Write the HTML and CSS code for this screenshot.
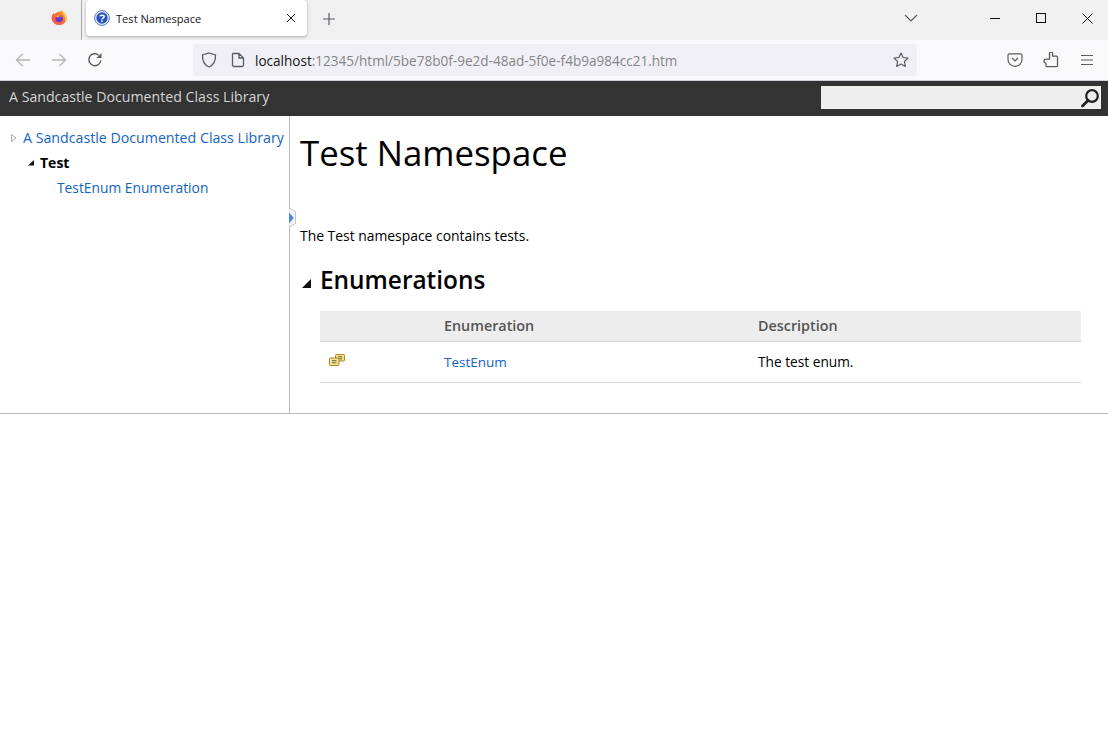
FILE: index.html
```html
<!DOCTYPE html>
<html lang="en">
<head>
<meta charset="utf-8">
<title>Test Namespace</title>
<link rel="stylesheet" href="styles.css">
</head>
<body>
<div class="tabbar">
  <div class="ff-slot">
    <svg class="ff-logo" width="16" height="16" viewBox="0 0 16 16"><defs><linearGradient id="ffbody" x1="0" y1="1" x2="1" y2="0"><stop offset="0" stop-color="#f0476a"/><stop offset=".55" stop-color="#f7752e"/><stop offset="1" stop-color="#ffc02e"/></linearGradient></defs><path d="M.5 7.500C1 5.500 1.500 4 3 2.700 3 3.500 3.300 4 3.800 4.300 5 2.500 7.500 1.500 9.500 1.600 9.800 1 10.300.5 11 0 11 1 11.800 1.600 12.800 2.300 14.600 3.800 15.800 6 15.800 8.300A7.700 7.700 0 0 1 .5 8.300Z" fill="url(#ffbody)"/><path d="M10.500 1C13.500 2.500 15.500 5.500 15.500 8.500 15.500 9.500 15.300 10.500 14.800 11.500 14.800 8 13 4 10.500 1Z" fill="#ffd84a"/><circle cx="8.200" cy="8.500" r="3.700" fill="#6b36c9"/><path d="M4 6.500C6 4.300 10 4.300 11.800 7 10 6 8 6.300 7 7.800 6 7.300 5 6.800 4 6.500Z" fill="#fb9a2c"/></svg>
  </div>
  <div class="tab">
    <svg class="tab-icon" width="16" height="16" viewBox="0 0 16 16"><circle cx="8" cy="8" r="7.400" fill="#eef3fb" stroke="#5a74b8" stroke-width="1"/><circle cx="8" cy="8" r="5.700" fill="#2450c0"/><path d="M5.800 6.400C6 4.800 10.200 4.600 10.300 6.600 10.300 8 8 8 8 9.400" fill="none" stroke="#fff" stroke-width="1.500"/><rect x="7.200" y="10.400" width="1.600" height="1.600" fill="#fff"/></svg>
    <span class="tab-title">Test Namespace</span>
    <svg class="tab-close" width="10" height="10" viewBox="0 0 10 10"><path d="M1 1l8 8M9 1l-8 8" stroke="#15141a" stroke-width="1"/></svg>
  </div>
  <svg class="new-tab" width="14" height="14" viewBox="0 0 14 14"><path d="M7 1v12M1 7h12" stroke="#5b5b66" stroke-width="1.200"/></svg>
  <div class="spacer"></div>
  <svg class="tab-list" width="14" height="8" viewBox="0 0 14 8"><path d="M1 1l6 6 6-6" fill="none" stroke="#5b5b66" stroke-width="1.200"/></svg>
  <div class="win-buttons">
    <svg width="10" height="10" viewBox="0 0 10 10"><path d="M0 5.500h10" stroke="#111" stroke-width="1"/></svg>
    <svg width="10" height="10" viewBox="0 0 10 10"><rect x=".5" y=".5" width="9" height="9" fill="none" stroke="#111" stroke-width="1"/></svg>
    <svg width="11" height="11" viewBox="0 0 11 11"><path d="M.5.500l10 10M10.500.500l-10 10" stroke="#111" stroke-width="1"/></svg>
  </div>
</div>
<div class="toolbar">
  <div class="nav-buttons">
    <svg width="16" height="16" viewBox="0 0 16 16"><path d="M15 8H1.500M7.500 2L1.500 8l6 6" fill="none" stroke="#b4b4ba" stroke-width="1.300"/></svg>
    <svg width="16" height="16" viewBox="0 0 16 16"><path d="M1 8h13.500M8.500 2l6 6-6 6" fill="none" stroke="#b4b4ba" stroke-width="1.300"/></svg>
    <svg width="16" height="16" viewBox="0 0 16 16"><path d="M13.800 8.500A6 6 0 1 1 11.800 3.200" fill="none" stroke="#5b5b66" stroke-width="1.400"/><path d="M14.500 1v5h-5z" fill="#5b5b66"/></svg>
  </div>
  <div class="urlbar">
    <svg class="shield" width="16" height="16" viewBox="0 0 16 16"><path d="M8 1L14.500 3C14.800 9 12.500 13 8 15 3.500 13 1.200 9 1.500 3Z" fill="none" stroke="#5b5b66" stroke-width="1.300"/></svg>
    <svg class="page" width="14" height="16" viewBox="0 0 14 16"><path d="M2 1.500H8L12.500 6V13a1.500 1.500 0 0 1-1.500 1.500H3A1.500 1.500 0 0 1 1.500 13V2ZM8 1.500V6h4.500" fill="none" stroke="#5b5b66" stroke-width="1.300"/></svg>
    <span class="url"><span class="host">localhost</span>:12345/html/5be78b0f-9e2d-48ad-5f0e-f4b9a984cc21.htm</span>
    <span class="spacer"></span>
    <svg width="16" height="16" viewBox="0 0 16 16"><path d="M8 1l2.100 4.500 4.900.6-3.600 3.400.9 4.900L8 12l-4.300 2.400.9-4.900L1 6.100l4.900-.6Z" fill="none" stroke="#5b5b66" stroke-width="1.200" stroke-linejoin="round"/></svg>
  </div>
  <div class="tool-buttons">
    <svg width="16" height="14" viewBox="0 0 16 14"><path d="M2.500.800h11A1.500 1.500 0 0 1 15 2.300V6.500A7 6.800 0 0 1 1 6.500V2.300A1.500 1.500 0 0 1 2.500.800Z" fill="none" stroke="#5b5b66" stroke-width="1.200"/><path d="M5 5l3 3 3-3" fill="none" stroke="#5b5b66" stroke-width="1.200"/></svg>
    <svg width="16" height="16" viewBox="0 0 16 16"><path d="M6.500 1.500a1.500 1.500 0 0 1 3 1V4.500H13.500a1 1 0 0 1 1 1V14a1 1 0 0 1-1 1H4a1 1 0 0 1-1-1V11.500H3A2 2 0 0 1 3 7.500V7.500H6.500V4.500Z" transform="translate(0 -.3)" fill="none" stroke="#5b5b66" stroke-width="1.300" stroke-linejoin="round"/></svg>
    <svg class="menu-icon" width="14" height="12" viewBox="0 0 14 12"><path d="M1 1.500h12M1 6h12M1 10.500h12" stroke="#5b5b66" stroke-width="1.200"/></svg>
  </div>
</div>
<header class="doc-header">
  <span class="doc-title">A Sandcastle Documented Class Library</span>
  <div class="search">
    <svg class="search-icon" width="20" height="20" viewBox="0 0 20 20"><circle cx="12" cy="8" r="5.800" fill="none" stroke="#222" stroke-width="2.200"/><path d="M8 12.500L2.500 18" stroke="#222" stroke-width="2.800" stroke-linecap="round"/></svg>
  </div>
</header>
<div class="doc-body">
  <nav class="sidebar">
    <div class="toc-row toc-root">
      <svg class="toc-arrow" width="6" height="8" viewBox="0 0 6 8"><path d="M.5.500L5 4 .5 7.500Z" fill="#fff" stroke="#a8a8a8"/></svg>
      <a class="link" href="#">A Sandcastle Documented Class Library</a>
    </div>
    <div class="toc-row toc-current">
      <svg class="toc-arrow" width="6" height="6" viewBox="0 0 6 6"><path d="M6 0V5.500H0Z" fill="#111"/></svg>
      <strong>Test</strong>
    </div>
    <div class="toc-row toc-leaf"><a class="link" href="#">TestEnum Enumeration</a></div>
    <svg class="resizer" width="7" height="21" viewBox="0 0 7 21"><path d="M0 .5L6.500 4.500V16.500L0 20.500Z" fill="#f4f4f4" stroke="#c4c4c4"/><path d="M0 5.500L4.800 11 0 16.500Z" fill="#4a86e0"/></svg>
  </nav>
  <main class="content">
    <h1>Test Namespace</h1>
    <p class="summary">The Test namespace contains tests.</p>
    <h2><svg class="section-arrow" width="9" height="9" viewBox="0 0 9 9"><path d="M9 0V9H0Z" fill="#111"/></svg>Enumerations</h2>
    <table>
      <thead><tr><th class="col-icon"></th><th class="col-name">Enumeration</th><th>Description</th></tr></thead>
      <tbody><tr>
        <td class="col-icon"><svg width="16" height="13" viewBox="0 0 16 13"><rect x="6.500" y=".5" width="9" height="6.500" rx="1" fill="#f6dc7c" stroke="#a8872f"/><path d="M9 2.800h4M9 4.800h4" stroke="#5d6a58"/><rect x=".5" y="4" width="9.500" height="7.500" rx="1" fill="#f8e08a" stroke="#a8872f"/><path d="M3 6.700h4.500M3 8.800h4.500" stroke="#5d6a58"/></svg></td>
        <td class="cell-name"><a class="link" href="#">TestEnum</a></td>
        <td class="cell-desc">The test enum.</td>
      </tr></tbody>
    </table>
  </main>
</div>
</body>
</html>
```
FILE: styles.css
```css
* { box-sizing: border-box; }
html, body { margin: 0; padding: 0; background: #fff; }
body { font-family: "Open Sans", "Noto Sans", sans-serif; color: #000; height: 748px; overflow: hidden; }
svg { display: block; flex: none; }
.spacer { flex: 1; }

.tabbar { height: 40px; background: #f0f0f0; display: flex; align-items: center; }
.ff-slot { width: 82px; height: 40px; border-right: 1px solid #a8a8a8; padding: 10px 0 0 51px; }
.tab { width: 221px; height: 36px; margin: 0 0 4px 4px; background: #fff; border-radius: 4px; box-shadow: 0 1px 3px rgba(0,0,0,.3); display: flex; align-items: center; padding: 0 11px 0 8px; }
.tab-title { font-size: 11.100px; margin-left: 6px; flex: 1; color: #15141a; white-space: nowrap; }
.new-tab { margin-left: 15px; margin-top: -3px; }
.tab-list { margin: -4px 0 0 0; }
.win-buttons { display: flex; align-items: center; gap: 36px; margin: -4px 15px 0 72px; }

.toolbar { height: 41px; background: #f9f9fb; border-bottom: 1px solid #cfcfd8; display: flex; align-items: center; padding-bottom: 1px; }
.nav-buttons { display: flex; gap: 20px; margin-left: 15px; width: 178px; align-items: center; }
.urlbar { width: 724px; height: 32px; background: #f0f0f4; border-radius: 4px; display: flex; align-items: center; padding: 0 8px 0 8px; }
.page { margin-left: 14px; }
.url { margin: 2px 0 0 10px; font-size: 13.550px; color: #85858d; white-space: nowrap; }
.host { color: #15141a; }
.tool-buttons { display: flex; align-items: center; gap: 20px; margin-left: 90px; }
.menu-icon { margin-left: 1px; }

.doc-header { height: 35px; background: #333; display: flex; align-items: center; justify-content: space-between; padding: 0 7px 5px 9px; }
.doc-title { font-size: 14.160px; color: #d4d4d4; white-space: nowrap; }
.search { width: 280px; height: 23px; background: #eee; margin-top: 3px; padding-right: 1px; display: flex; justify-content: flex-end; align-items: center; }

.doc-body { display: flex; height: 298px; border-bottom: 1px solid #bbb; }
.sidebar { width: 290px; flex: none; border-right: 1px solid #bbb; position: relative; padding-top: 9px; font-size: 14px; }
.toc-row { height: 25px; display: flex; align-items: center; white-space: nowrap; }
.toc-root { padding-left: 11px; font-size: 14.200px; }
.toc-root .link { margin-left: 6px; }
.toc-current { padding-left: 28px; }
.toc-current strong { margin-left: 6px; }
.toc-leaf { padding-left: 57px; font-size: 13.800px; }
.resizer { position: absolute; left: 289px; top: 91px; }
.link { color: #1364c4; text-decoration: none; }

.content { flex: 1; min-width: 0; padding: 0 27px 0 10px; font-size: 13.900px; }
h1 { font-size: 34.800px; font-weight: 400; line-height: 48px; margin: 13px 0 0; }
.summary { margin: 49px 0 0; line-height: 20px; }
h2 { font-size: 24.400px; font-weight: 600; line-height: 34px; margin: 17px 0 0; display: flex; align-items: center; gap: 9px; padding-left: 2px; }
.section-arrow { margin-top: 6px; }
table { width: 761px; margin: 14px 0 0 20px; border-collapse: collapse; table-layout: fixed; }
th { background: #ededed; color: #555; font-size: 14.350px; font-weight: 600; text-align: left; height: 30px; padding: 0; border-bottom: 1px solid #d5d5d5; }
td { height: 41px; padding: 0; border-bottom: 1px solid #d5d5d5; }
.cell-name { font-size: 13.500px; }
.cell-desc { font-size: 13.700px; }
.col-icon { width: 124px; padding-left: 9px; }
td.col-icon svg { margin-top: -2px; }
.col-name { width: 314px; }
```
